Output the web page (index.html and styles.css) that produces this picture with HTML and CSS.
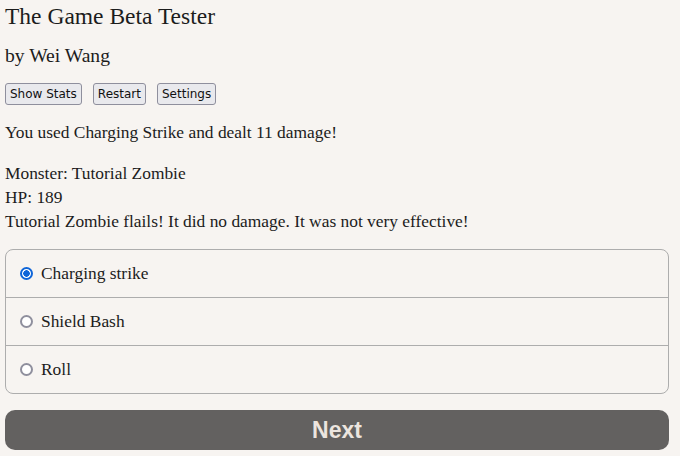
FILE: index.html
```html
<!DOCTYPE html>
<html>
<head>
<meta charset="utf-8">
<link rel="stylesheet" href="styles.css">
</head>
<body>
<h1 class="title">The Game Beta Tester</h1>
<h3 class="byline">by Wei Wang</h3>
<div class="toolbar">
  <button class="tool-btn">Show Stats</button>
  <button class="tool-btn">Restart</button>
  <button class="tool-btn">Settings</button>
</div>
<p class="result">You used Charging Strike and dealt 11 damage!</p>
<div class="monster">
  <div class="line">Monster: Tutorial Zombie</div>
  <div class="line">HP: 189</div>
  <div class="line">Tutorial Zombie flails! It did no damage. It was not very effective!</div>
</div>
<div class="choices">
  <label class="choice"><span class="radio checked"></span><span class="choice-text">Charging strike</span></label>
  <label class="choice"><span class="radio"></span><span class="choice-text">Shield Bash</span></label>
  <label class="choice"><span class="radio"></span><span class="choice-text">Roll</span></label>
</div>
<button class="next-btn">Next</button>
</body>
</html>
```
FILE: styles.css
```css
html, body {
  margin: 0;
  padding: 0;
  background: #f7f4f1;
}
body {
  padding: 0 11px 0 5px;
  font-family: "Liberation Serif", serif;
  font-size: 17.4px;
  color: #1c1c1c;
}
.title {
  margin: 1px 0 0;
  font-size: 23.5px;
  font-weight: normal;
  line-height: 31px;
}
.byline {
  margin: 11px 0 0;
  font-size: 19.6px;
  font-weight: normal;
  line-height: 26px;
}
.toolbar {
  margin-top: 14px;
  display: flex;
  gap: 11px;
}
.tool-btn {
  font-family: "DejaVu Sans", sans-serif;
  font-size: 12px;
  color: #111;
  background: #e9e9ed;
  border: 1px solid #8f8f9d;
  border-radius: 3px;
  padding: 0 4px;
  height: 22px;
  line-height: 20px;
}
.result {
  margin: 15px 0 0;
  line-height: 24px;
}
.monster {
  margin-top: 17px;
}
.line {
  line-height: 24px;
}
.choices {
  margin-top: 16px;
  border: 1px solid #adadad;
  border-radius: 8px;
  display: flex;
  flex-direction: column;
}
.choice {
  display: flex;
  align-items: center;
  height: 47px;
  padding-left: 14px;
  border-top: 1px solid #adadad;
}
.choice:first-child {
  border-top: none;
}
.radio {
  width: 9px;
  height: 9px;
  border: 2px solid #8f8f9d;
  border-radius: 50%;
  box-sizing: content-box;
  margin-right: 8px;
  background: #fff;
}
.radio.checked {
  border-color: #0f65d8;
  background: radial-gradient(circle, #0f65d8 0 3px, #fff 3.5px);
}
.next-btn {
  display: block;
  width: 100%;
  margin-top: 16px;
  height: 40px;
  border: none;
  border-radius: 10px;
  background: #636160;
  color: #ece5df;
  font-family: "Liberation Sans", Arial, sans-serif;
  font-weight: bold;
  font-size: 23px;
}
```
